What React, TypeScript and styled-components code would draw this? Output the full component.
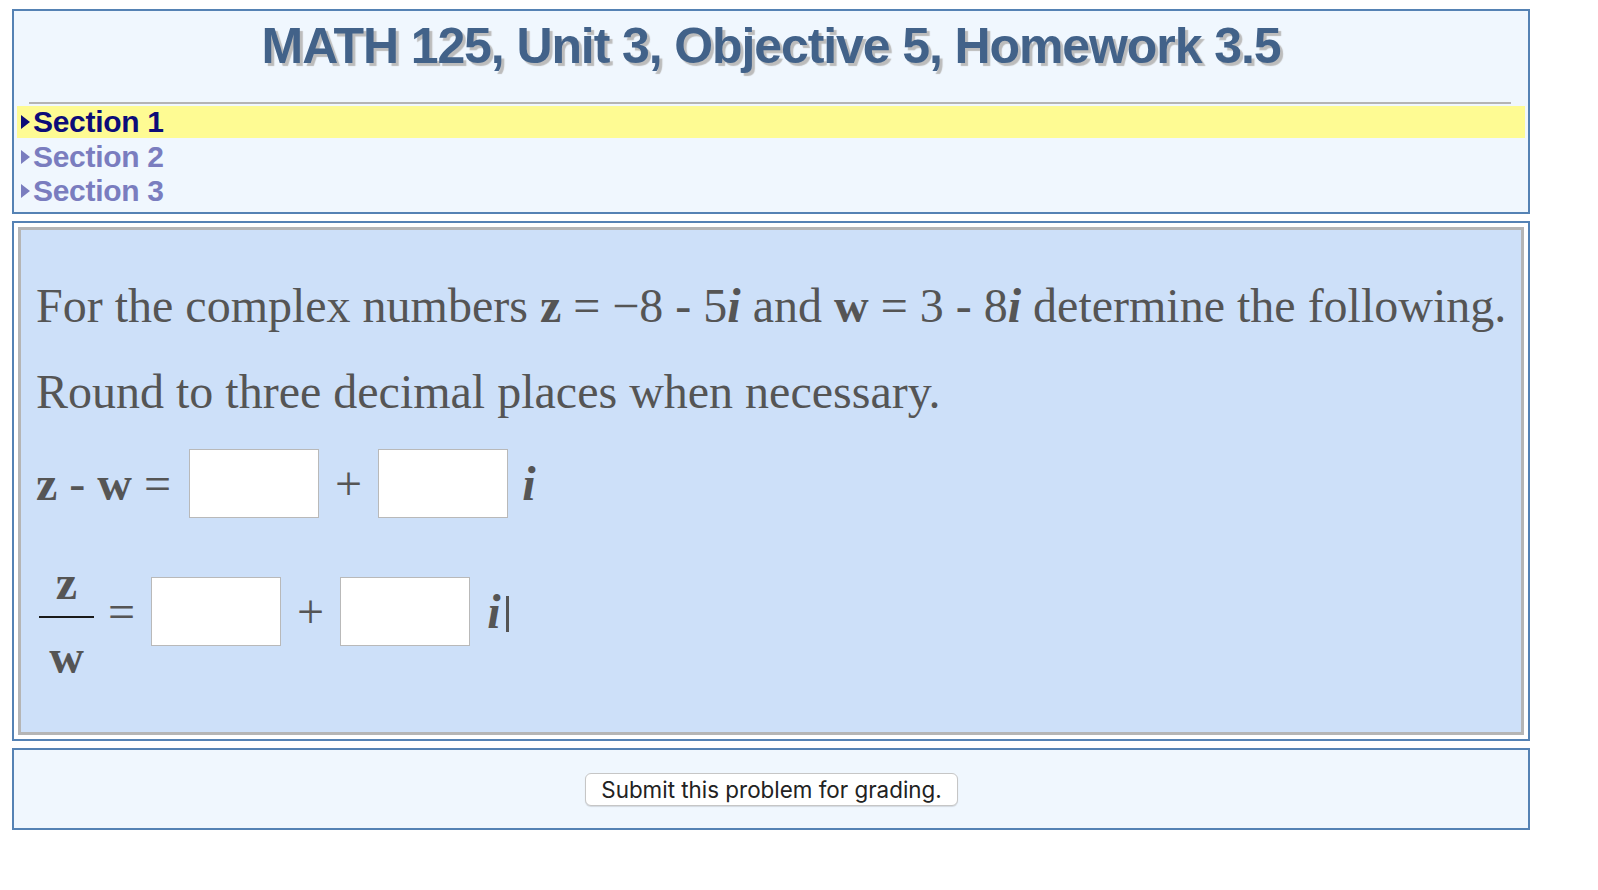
import styled, { createGlobalStyle } from "styled-components";

const GlobalStyle = createGlobalStyle`
  body {
    margin: 9px 12px;
    background: #ffffff;
    font-family: "Liberation Sans", Arial, sans-serif;
  }
`;

const sections = ["Section 1", "Section 2", "Section 3"];

function App() {
  return (
    <>
      <GlobalStyle />
      <Page>
        <Header>
          <Title>MATH 125, Unit 3, Objective 5, Homework 3.5</Title>
          <Rule />
          <SectionList>
            {sections.map((s, i) => (
              <SectionRow key={s} $active={i === 0}>
                <Arrow $active={i === 0} />
                {s}
              </SectionRow>
            ))}
          </SectionList>
        </Header>

        <ProblemFrame>
          <Problem>
            <Para>
              For the complex numbers <b>z</b> = −8 - 5<BoldI>i</BoldI> and{" "}
              <b>w</b> = 3 - 8<BoldI>i</BoldI> determine the following.
            </Para>
            <Para $gap={31}>Round to three decimal places when necessary.</Para>

            <EquationRow $gap={30}>
              <Label>
                <b>z</b> - <b>w</b> =
              </Label>
              <Answer />
              <Plus>+</Plus>
              <Answer />
              <Imag>i</Imag>
            </EquationRow>

            <EquationRow $gap={8}>
              <Fraction>
                <Num>z</Num>
                <Bar />
                <Den>w</Den>
              </Fraction>
              <Equals>=</Equals>
              <Answer />
              <Plus>+</Plus>
              <Answer />
              <Imag $wide>i</Imag>
              <Caret />
            </EquationRow>
          </Problem>
        </ProblemFrame>

        <SubmitBox>
          <SubmitButton>Submit this problem for grading.</SubmitButton>
        </SubmitBox>
      </Page>
    </>
  );
}
export default App;

const Page = styled.div`
  width: 1518px;
  display: flex;
  flex-direction: column;
  gap: 7px;
`;

const Header = styled.section`
  background: #f0f7fe;
  border: 2px solid #5582b4;
  padding: 3px 3px 4px;
`;

const Title = styled.h1`
  margin: 3px 0 0;
  height: 85px;
  text-align: center;
  font-family: "Liberation Sans", Arial, sans-serif;
  font-size: 50px;
  font-weight: bold;
  letter-spacing: -1.1px;
  color: #426289;
  text-shadow: 3px 3px 1px #bcbcbc;
  line-height: 58px;
`;

const Rule = styled.hr`
  margin: 0 14px 2px 12px;
  border: none;
  border-top: 2px solid #b4b4b4;
`;

const SectionList = styled.div`
  display: flex;
  flex-direction: column;
`;

const SectionRow = styled.div<{ $active?: boolean }>`
  display: flex;
  align-items: center;
  height: ${(p) => (p.$active ? "32px" : "34px")};
  margin-bottom: ${(p) => (p.$active ? "2px" : "0")};
  background: ${(p) => (p.$active ? "#fefb93" : "transparent")};
  color: ${(p) => (p.$active ? "#0c0c78" : "#7a7dbf")};
  font-size: 30px;
  font-weight: bold;
  letter-spacing: -0.3px;
  padding-left: 4px;
`;

const Arrow = styled.span<{ $active?: boolean }>`
  width: 0;
  height: 0;
  margin-right: 3px;
  border-top: 7px solid transparent;
  border-bottom: 7px solid transparent;
  border-left: 9px solid ${(p) => (p.$active ? "#0c0c78" : "#7a7dbf")};
`;

const ProblemFrame = styled.section`
  border: 2px solid #5582b4;
  padding: 4px;
  background: #ffffff;
`;

const Problem = styled.div`
  background: #cde0f9;
  border: 3px solid #b5b5b5;
  padding: 48px 6px 36px 15px;
  font-family: "Liberation Serif", "Times New Roman", serif;
  font-size: 48px;
  color: #555555;
`;

const Para = styled.p<{ $gap?: number }>`
  margin: ${(p) => p.$gap ?? 0}px 0 0;
  line-height: 55px;
  white-space: nowrap;
`;

const BoldI = styled.b`
  font-style: italic;
`;

const EquationRow = styled.div<{ $gap: number }>`
  display: flex;
  align-items: center;
  margin-top: ${(p) => p.$gap}px;
  min-height: 69px;
  line-height: 55px;
`;

const Label = styled.span`
  margin-right: 18px;
  white-space: pre;
`;

const Answer = styled.input.attrs({ type: "text" })`
  width: 130px;
  height: 69px;
  box-sizing: border-box;
  border: 1px solid #b9b9b9;
  background: #ffffff;
  padding: 0;
  margin: 0;
  font-size: 30px;
`;

const Plus = styled.span`
  margin: 0 16px;
`;

const Imag = styled.b<{ $wide?: boolean }>`
  font-style: italic;
  margin-left: ${(p) => (p.$wide ? "17px" : "14px")};
`;

const Caret = styled.span`
  display: inline-block;
  width: 3px;
  height: 36px;
  margin: 6px 0 0 5px;
  background: #555555;
`;

const Fraction = styled.span`
  display: inline-flex;
  flex-direction: column;
  align-items: center;
  width: 55px;
  margin: 24px 14px 0 3px;
  font-weight: bold;
`;

const Num = styled.span`
  line-height: 66px;
`;

const Den = styled.span`
  line-height: 78px;
`;

const Bar = styled.span`
  display: block;
  width: 55px;
  height: 2px;
  background: #1a1a1a;
`;

const Equals = styled.span`
  margin-right: 16px;
`;

const SubmitBox = styled.section`
  background: #f0f7fe;
  border: 2px solid #5582b4;
  height: 78px;
  display: flex;
  align-items: center;
  justify-content: center;
`;

const SubmitButton = styled.button`
  height: 33px;
  padding: 0 15px;
  margin-left: 1px;
  background: #ffffff;
  border: 1px solid #c6c6c6;
  border-radius: 6px;
  box-shadow: 0 1px 1px rgba(0, 0, 0, 0.12);
  font-family: Inter, "Liberation Sans", sans-serif;
  font-size: 22.4px;
  color: #222222;
`;
